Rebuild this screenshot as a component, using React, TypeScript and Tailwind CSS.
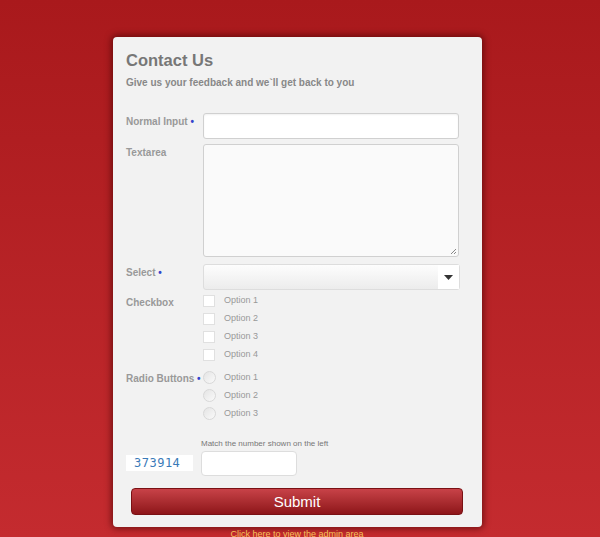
import React from "react";

export default function App() {
  const checks = ["Option 1", "Option 2", "Option 3", "Option 4"];
  const radios = ["Option 1", "Option 2", "Option 3"];
  return (
    <div
      className="w-[600px] h-[537px] overflow-hidden bg-gradient-to-b from-[#a9191c] to-[#c42b2f] flex flex-col items-center"
      style={{ fontFamily: '"Liberation Sans", Arial, sans-serif' }}
    >
      <div className="mt-[37px] ml-[-5px] w-[369px] h-[490px] shrink-0 rounded-[4px] bg-[#f2f2f2] shadow-[0_0_6px_2px_rgba(60,0,0,0.55)] px-[13px] pt-[12px] flex flex-col">
        <h1 className="text-[16.5px] leading-[22px] font-bold text-[#777]">Contact Us</h1>
        <p className="mt-[5px] text-[10px] leading-[14px] font-bold text-[#888]">
          Give us your feedback and we`ll get back to you
        </p>

        <div className="mt-[23px] flex items-start">
          <label className="w-[77px] pt-[2px] text-[10px] leading-[14px] font-bold text-[#999]">
            Normal Input <span className="text-[#3344cc]">•</span>
          </label>
          <div className="w-[256px] h-[26px] rounded-[3px] border border-[#d0d0d0] bg-white shadow-[inset_0_1px_2px_rgba(0,0,0,0.06)]" />
        </div>

        <div className="mt-[5px] flex items-start">
          <label className="w-[77px] pt-[2px] text-[10px] leading-[14px] font-bold text-[#999]">Textarea</label>
          <div className="relative w-[256px] h-[113px] rounded-[3px] border border-[#d0d0d0] bg-[#fafafa]">
            <svg className="absolute right-[1px] bottom-[1px]" width="7" height="7" viewBox="0 0 7 7">
              <path d="M6 1 L1 6 M6 4 L4 6" stroke="#888" strokeWidth="1" />
            </svg>
          </div>
        </div>

        <div className="mt-[7px] flex items-start">
          <label className="w-[77px] pt-[2px] text-[10px] leading-[14px] font-bold text-[#999]">
            Select <span className="text-[#3344cc]">•</span>
          </label>
          <div className="w-[257px] h-[26px] rounded-[3px] border border-[#ddd] bg-gradient-to-b from-[#fdfdfd] to-[#ececec] flex justify-end">
            <div className="w-[21px] h-full bg-white flex items-center justify-center">
              <svg width="9" height="5" viewBox="0 0 9 5">
                <path d="M0 0 H9 L4.5 5 Z" fill="#333" />
              </svg>
            </div>
          </div>
        </div>

        <div className="mt-[5px] flex items-start">
          <label className="w-[77px] pt-[1px] text-[10px] leading-[14px] font-bold text-[#999]">Checkbox</label>
          <div className="flex flex-col gap-[6px]">
            {checks.map((c) => (
              <div key={c} className="flex items-center h-[12px]">
                <div className="w-[12px] h-[12px] border border-[#e0e0e0] bg-white" />
                <span className="ml-[9px] text-[9px] text-[#999]">{c}</span>
              </div>
            ))}
          </div>
        </div>

        <div className="mt-[10px] flex items-start">
          <label className="w-[77px] pt-[1px] text-[10px] leading-[14px] font-bold text-[#999] whitespace-nowrap">
            Radio Buttons <span className="text-[#3344cc]">•</span>
          </label>
          <div className="flex flex-col gap-[5px]">
            {radios.map((c) => (
              <div key={c} className="flex items-center h-[13px]">
                <div className="w-[13px] h-[13px] rounded-full border border-[#d8d8d8] bg-gradient-to-br from-[#e4e4e4] to-[#fafafa]" />
                <span className="ml-[8px] text-[9px] text-[#999]">{c}</span>
              </div>
            ))}
          </div>
        </div>

        <div className="mt-[19px] flex items-end">
          <div className="w-[67px] h-[16px] bg-white mb-[5px] pl-[8px] text-[12px] leading-[16px] text-[#3a7ab8] tracking-[0.5px]" style={{ fontFamily: '"DejaVu Sans Mono", monospace' }}>
            373914
          </div>
          <div className="ml-[8px] flex flex-col">
            <span className="text-[8px] leading-[10px] text-[#777]">Match the number shown on the left</span>
            <div className="mt-[2px] w-[96px] h-[25px] rounded-[4px] border border-[#ddd] bg-white" />
          </div>
        </div>

        <button className="mt-[12px] ml-[5px] w-[332px] h-[27px] rounded-[4px] border border-[#7a1114] bg-gradient-to-b from-[#c84248] to-[#8e1519] text-white text-[15px] leading-[25px]">
          Submit
        </button>
      </div>
      <div className="mt-[2px] ml-[-6px] text-[9px] leading-[11px] text-[#f5c35a]">Click here to view the admin area</div>
    </div>
  );
}
